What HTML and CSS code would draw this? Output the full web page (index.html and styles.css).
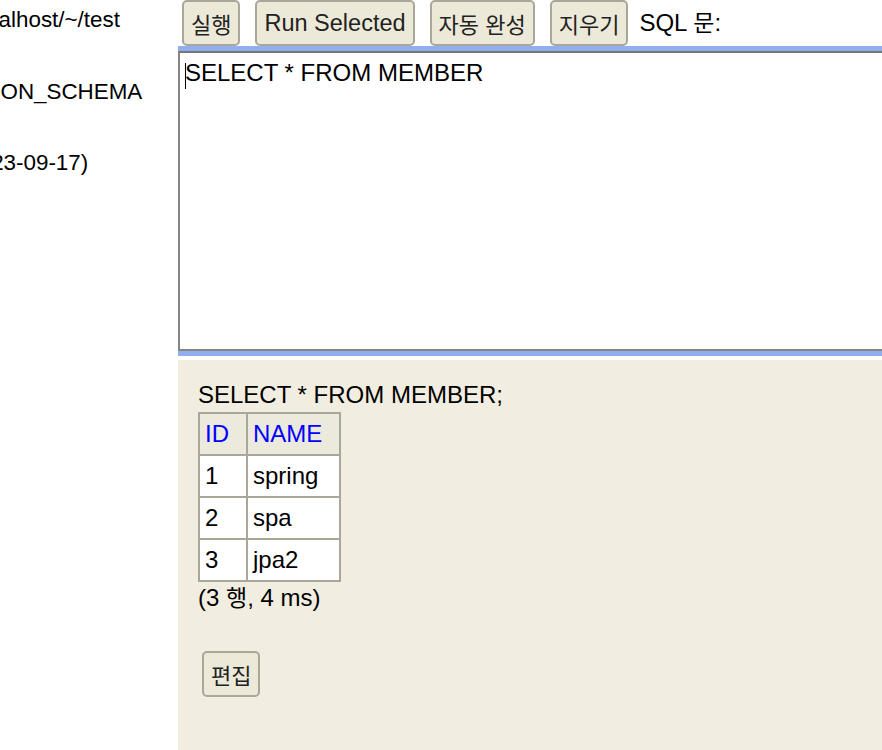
FILE: index.html
```
<!DOCTYPE html>
<html lang="ko">
<head>
    <meta charset="UTF-8">
    <meta name="viewport" content="width=device-width, initial-scale=1.0">
    <title>H2 Console</title>
    <link rel="stylesheet" href="styles.css">
</head>
<body>
    <div class="page">
        <div class="tree">
            <div class="tree-list">
                <div class="tree-row">jdbc:h2:tcp://localhost/~/test</div>
                <div class="tree-row sub">MEMBER</div>
                <div class="tree-row sub">INFORMATION_SCHEMA</div>
                <div class="tree-row sub">Users</div>
                <div class="tree-row">H2 2.2.224 (2023-09-17)</div>
            </div>
        </div>

        <div class="main">
            <div class="toolbar">
                <button class="btn ko">실행</button>
                <button class="btn">Run Selected</button>
                <button class="btn ko">자동 완성</button>
                <button class="btn ko">지우기</button>
                <span class="toolbar-label">SQL <span class="ko">문</span>:</span>
            </div>

            <div class="editor">
                <div class="sql-input"><span class="caret"></span>SELECT * FROM MEMBER</div>
            </div>

            <div class="result">
                <div class="result-sql">SELECT * FROM MEMBER;</div>
                <table class="result-table">
                    <tr>
                        <th>ID</th>
                        <th>NAME</th>
                    </tr>
                    <tr>
                        <td>1</td>
                        <td>spring</td>
                    </tr>
                    <tr>
                        <td>2</td>
                        <td>spa</td>
                    </tr>
                    <tr>
                        <td>3</td>
                        <td>jpa2</td>
                    </tr>
                </table>
                <div class="result-info">(3 <span class="ko">행</span>, 4 ms)</div>
                <button class="btn ko edit-btn">편집</button>
            </div>
        </div>
    </div>
</body>
</html>
```

FILE: styles.css
```
body {
    margin: 0;
    font-family: "Liberation Sans", "Noto Sans CJK KR", sans-serif;
    font-size: 24px;
    color: #000;
    background-color: #fff;
}
.page {
    display: flex;
    height: 750px;
    overflow: hidden;
}

/* left tree, scrolled sideways */
.tree {
    width: 178px;
    flex-shrink: 0;
    overflow: hidden;
}
.tree-list {
    margin-left: -157px;
    padding-top: 2px;
    font-size: 22.4px;
}
.tree-row {
    line-height: 35.75px;
    white-space: nowrap;
}
.tree-row.sub {
    padding-left: 36px;
}

/* right side */
.main {
    flex: 1;
    min-width: 0;
    display: flex;
    flex-direction: column;
    overflow: hidden;
}
.toolbar {
    display: flex;
    align-items: center;
    gap: 15px;
    height: 46px;
    padding-left: 4px;
    white-space: nowrap;
}
.toolbar-label {
    margin-left: -4px;
    line-height: 46px;
}
.ko {
    font-size: 23px;
}
.btn {
    height: 46px;
    padding: 0 7px;
    font-family: "Liberation Sans", "Noto Sans CJK KR", sans-serif;
    font-size: 23.5px;
    color: #222;
    background-color: #ece9d8;
    border: 2px solid #aaa79a;
    border-radius: 5px;
    box-sizing: border-box;
    cursor: pointer;
}
.btn.ko {
    font-size: 22px;
}

.editor {
    border-top: 5px solid #91aeef;
    border-bottom: 5px solid #91aeef;
}
.sql-input {
    height: 300px;
    margin-right: -10px;
    padding: 6px 5px 2px;
    line-height: 28px;
    background-color: #fff;
    border: 2px solid #858585;
    border-top-color: #767676;
    box-sizing: border-box;
    white-space: pre;
}
.caret {
    display: inline-block;
    width: 1px;
    height: 26px;
    margin-right: -1px;
    vertical-align: -8px;
    background-color: #000;
}

.result {
    flex: 1;
    margin-top: 4px;
    padding: 21px 20px;
    background-color: #f1eee1;
}
.result-sql {
    line-height: 28px;
}
.result-table {
    margin-top: 3px;
    border-collapse: collapse;
}
.result-table th,
.result-table td {
    padding: 6px 17px 6px 5px;
    line-height: 28px;
    text-align: left;
    font-weight: normal;
    border: 2px solid #aaa699;
}
.result-table th {
    color: #0000ff;
    background-color: #ece9dd;
}
.result-table td {
    background-color: #fff;
}
.result-info {
    margin-top: 2px;
    line-height: 28px;
}
.edit-btn {
    margin-top: 39px;
    margin-left: 4px;
}
```
